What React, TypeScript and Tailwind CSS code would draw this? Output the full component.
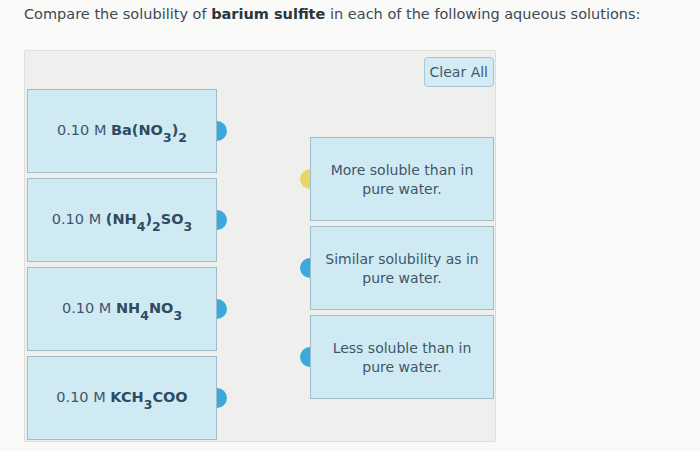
import React from 'react';

type Choice = { id: string; label: React.ReactNode };

const Sub: React.FC<{ children: React.ReactNode }> = ({ children }) => (
  <sub className="text-[12.5px] align-[-4px]">{children}</sub>
);

const solutions: Choice[] = [
  {
    id: 'ba',
    label: (
      <>
        0.10 M <b className="font-bold text-[#2f4b5f]">Ba(NO<Sub>3</Sub>)<Sub>2</Sub></b>
      </>
    ),
  },
  {
    id: 'nh4so3',
    label: (
      <>
        0.10 M <b className="font-bold text-[#2f4b5f]">(NH<Sub>4</Sub>)<Sub>2</Sub>SO<Sub>3</Sub></b>
      </>
    ),
  },
  {
    id: 'nh4no3',
    label: (
      <>
        0.10 M <b className="font-bold text-[#2f4b5f]">NH<Sub>4</Sub>NO<Sub>3</Sub></b>
      </>
    ),
  },
  {
    id: 'kac',
    label: (
      <>
        0.10 M <b className="font-bold text-[#2f4b5f]">KCH<Sub>3</Sub>COO</b>
      </>
    ),
  },
];

const targets = [
  { id: 'more', text: 'More soluble than in pure water.', tab: 'bg-[#e8d56a]' },
  { id: 'similar', text: 'Similar solubility as in pure water.', tab: 'bg-[#3ba9d9]' },
  { id: 'less', text: 'Less soluble than in pure water.', tab: 'bg-[#3ba9d9]' },
];

const App: React.FC = () => {
  return (
    <div className="w-[700px] h-[451px] bg-[#f9f9f7] font-['DejaVu_Sans',sans-serif] text-[#3f5668] overflow-hidden">
      <p className="pl-[24px] pt-[5px] text-[14.5px] leading-[19px] text-[#3b4a56]">
        Compare the solubility of <b className="font-bold text-[#2a3540]">barium sulfite</b> in each of the following aqueous solutions:
      </p>

      <div className="ml-[24px] mt-[26px] w-[472px] h-[392px] bg-[#efefed] border border-[#dededc] rounded-[2px] flex flex-col pr-[1px]">
        <div className="flex justify-end pt-[6px]">
          <button className="h-[30px] px-[5px] rounded-[4px] bg-[#d3ebf4] border border-[#a7c6d3] text-[14px] text-[#405a6c]">
            Clear All
          </button>
        </div>

        <div className="flex mt-[2px]">
          {/* draggable solutions */}
          <div className="flex flex-col gap-[5px] ml-[2px] w-[190px]">
            {solutions.map((s) => (
              <div
                key={s.id}
                className="relative h-[84px] bg-[#d0eaf4] border border-[#9fbccb] flex items-center justify-center text-[14.5px]"
              >
                <span className="whitespace-nowrap">{s.label}</span>
                <span className="absolute right-[-11px] top-1/2 -translate-y-1/2 w-[10px] h-[20px] rounded-r-full bg-[#3ba9d9]" />
              </div>
            ))}
          </div>

          {/* drop targets */}
          <div className="flex flex-col gap-[5px] ml-auto mt-[48px] w-[184px]">
            {targets.map((t) => (
              <div
                key={t.id}
                className="relative h-[84px] bg-[#d0eaf4] border border-[#9fbccb] flex items-center justify-center px-[14px] pt-[2px] text-center text-[14px] leading-[19px]"
              >
                <span>{t.text}</span>
                <span className={`absolute left-[-11px] top-1/2 -translate-y-1/2 w-[10px] h-[20px] rounded-l-full ${t.tab}`} />
              </div>
            ))}
          </div>
        </div>
      </div>
    </div>
  );
};

export default App;
